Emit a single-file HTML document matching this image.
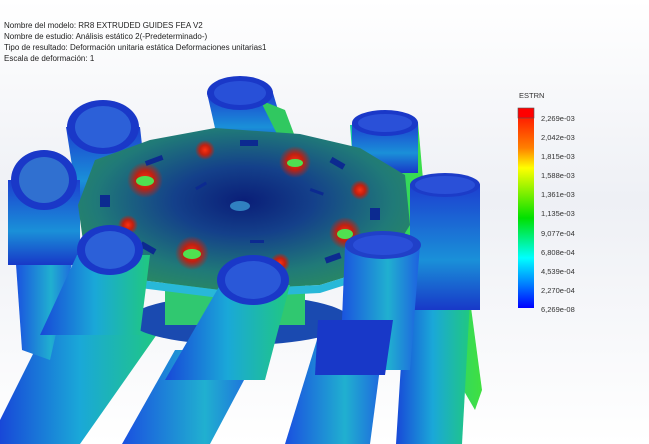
<!DOCTYPE html>
<html><head><meta charset="utf-8"><style>
html,body{margin:0;padding:0;width:649px;height:444px;overflow:hidden;background:#fff}
.bg{position:absolute;left:0;top:0;width:649px;height:444px;background:linear-gradient(180deg,#ffffff 0%,#eef0f5 45%,#ffffff 100%)}
.hdr{position:absolute;left:4px;top:20px;font:8px/11px "Liberation Sans",sans-serif;color:#222}
.lg{position:absolute;font:7.5px "Liberation Sans",sans-serif;color:#333}
svg{position:absolute;left:0;top:0}
</style></head><body>
<div class="bg"></div>
<svg width="649" height="444" viewBox="0 0 649 444">
<defs>
<linearGradient id="tube" x1="0" y1="0" x2="1" y2="0"><stop offset="0" stop-color="#1848d8"/><stop offset=".5" stop-color="#1aa8d8"/><stop offset="1" stop-color="#20c880"/></linearGradient>
<linearGradient id="tube2" x1="0" y1="0" x2="1" y2="0"><stop offset="0" stop-color="#1a50e0"/><stop offset=".6" stop-color="#20b0d0"/><stop offset="1" stop-color="#1e60e0"/></linearGradient>
<linearGradient id="grn" x1="0" y1="0" x2="1" y2="0"><stop offset="0" stop-color="#18c8a0"/><stop offset="1" stop-color="#40e040"/></linearGradient>
<linearGradient id="cup" x1="0" y1="0" x2="0" y2="1"><stop offset="0" stop-color="#1c40d0"/><stop offset=".6" stop-color="#1a90d8"/><stop offset="1" stop-color="#1838c8"/></linearGradient>
<radialGradient id="plate" cx=".5" cy=".45" r=".6"><stop offset="0" stop-color="#0a1e78"/><stop offset=".35" stop-color="#14408a"/><stop offset=".75" stop-color="#207a78"/><stop offset="1" stop-color="#2a8a60"/></radialGradient>
<radialGradient id="hot"><stop offset="0" stop-color="#ff3010"/><stop offset=".5" stop-color="#c02010"/><stop offset="1" stop-color="#c02010" stop-opacity="0"/></radialGradient>
<linearGradient id="bar" x1="0" y1="0" x2="0" y2="1"><stop offset="0" stop-color="#ff0000"/><stop offset=".2" stop-color="#ff8000"/><stop offset=".3" stop-color="#ffff00"/><stop offset=".55" stop-color="#00e000"/><stop offset=".75" stop-color="#00ffff"/><stop offset=".88" stop-color="#0080ff"/><stop offset="1" stop-color="#0000ff"/></linearGradient>
</defs>
<!-- legs -->
<polygon points="415,300 470,300 482,390 475,410 440,350" fill="url(#grn)"/>
<polygon points="45,330 160,330 80,444 0,444 0,420" fill="url(#tube)"/>
<polygon points="175,350 260,350 210,444 122,444" fill="url(#tube2)"/>
<polygon points="320,330 385,330 370,444 285,444" fill="url(#tube2)"/>
<polygon points="405,300 470,300 462,444 396,444" fill="url(#tube)"/>
<polygon points="15,250 75,250 50,360 22,350" fill="url(#tube2)"/>
<!-- under plate -->
<ellipse cx="240" cy="320" rx="110" ry="25" fill="#1a4ab0"/>
<rect x="165" y="280" width="140" height="45" fill="#30c870"/>
<!-- back cups -->
<polygon points="207,93 273,93 290,150 220,150" fill="url(#cup)"/>
<polygon points="260,100 285,110 300,150 285,150" fill="#30c860"/>
<ellipse cx="240" cy="93" rx="33" ry="17" fill="#1a38c8"/><ellipse cx="240" cy="93" rx="26" ry="12" fill="#2850d8"/>
<polygon points="350,125 418,122 430,260 410,270 355,190" fill="url(#grn)"/>
<rect x="352" y="123" width="66" height="50" fill="url(#cup)"/>
<ellipse cx="385" cy="123" rx="33" ry="13" fill="#1a38c8"/><ellipse cx="385" cy="123" rx="27" ry="9" fill="#2a50d8"/>
<polygon points="66,127 140,127 150,217 80,217" fill="url(#cup)"/>
<ellipse cx="103" cy="127" rx="36" ry="27" fill="#1a38c8"/><ellipse cx="103" cy="127" rx="28" ry="21" fill="#2c60d8"/>
<rect x="8" y="180" width="72" height="85" fill="url(#cup)"/>
<ellipse cx="44" cy="180" rx="33" ry="30" fill="#1a38c8"/><ellipse cx="44" cy="180" rx="25" ry="23" fill="#3070d0"/>
<!-- plate -->
<polygon points="95,160 150,140 215,128 300,134 360,148 405,175 410,225 385,265 320,285 220,290 140,280 85,255 78,205" fill="url(#plate)"/>
<polygon points="85,255 140,280 220,290 320,285 385,265 383,273 320,293 220,298 140,288 85,262" fill="#28b8d8"/>
<g fill="url(#hot)">
<circle cx="145" cy="180" r="18"/><circle cx="295" cy="162" r="16"/><circle cx="345" cy="233" r="16"/><circle cx="192" cy="253" r="17"/>
<circle cx="205" cy="150" r="10"/><circle cx="360" cy="190" r="10"/><circle cx="128" cy="225" r="10"/><circle cx="280" cy="263" r="10"/>
</g>
<g fill="#50e050"><ellipse cx="145" cy="181" rx="9" ry="5"/><ellipse cx="295" cy="163" rx="8" ry="4"/><ellipse cx="345" cy="234" rx="8" ry="5"/><ellipse cx="192" cy="254" rx="9" ry="5"/></g>
<g fill="#0c2a90"><rect x="145" y="158" width="18" height="5" transform="rotate(-20 154 160)"/><rect x="240" y="140" width="18" height="6"/><rect x="330" y="160" width="15" height="6" transform="rotate(30 337 163)"/><rect x="370" y="208" width="10" height="12"/><rect x="325" y="255" width="16" height="6" transform="rotate(-20 333 258)"/><rect x="100" y="195" width="10" height="12"/><rect x="140" y="245" width="16" height="6" transform="rotate(30 148 248)"/><rect x="195" y="185" width="12" height="3" transform="rotate(-30 200 186)"/><rect x="310" y="190" width="14" height="3" transform="rotate(20 316 191)"/><rect x="250" y="240" width="14" height="3"/></g>
<ellipse cx="240" cy="206" rx="10" ry="5" fill="#3080c0"/>
<!-- front cups -->
<rect x="410" y="185" width="70" height="125" fill="url(#cup)"/>
<ellipse cx="445" cy="185" rx="35" ry="12" fill="#1c3cc8"/><ellipse cx="445" cy="185" rx="30" ry="9" fill="#2a50d8"/>
<polygon points="345,245 420,245 410,370 340,370" fill="url(#tube2)"/>
<polygon points="318,320 393,320 385,375 315,375" fill="#1838c8"/>
<ellipse cx="383" cy="245" rx="38" ry="14" fill="#2040c8"/><ellipse cx="383" cy="245" rx="30" ry="10" fill="#2a4ed8"/>
<polygon points="77,255 150,255 140,335 40,335" fill="url(#tube)"/>
<ellipse cx="110" cy="250" rx="33" ry="25" fill="#1a38c8"/><ellipse cx="110" cy="250" rx="25" ry="19" fill="#2c60d8"/>
<polygon points="220,285 290,285 265,380 165,380" fill="url(#tube)"/>
<ellipse cx="253" cy="280" rx="36" ry="25" fill="#1a38c8"/><ellipse cx="253" cy="280" rx="28" ry="19" fill="#2a58d8"/>
<!-- legend -->
<rect x="518" y="108" width="16" height="200" fill="url(#bar)"/>
<rect x="518" y="108" width="16" height="10" fill="#ff0000" stroke="#555" stroke-width=".6"/>
</svg>
<div class="hdr">Nombre del modelo: RR8 EXTRUDED GUIDES FEA V2<br>Nombre de estudio: Análisis estático 2(-Predeterminado-)<br>Tipo de resultado: Deformación unitaria estática Deformaciones unitarias1<br>Escala de deformación: 1</div>
<div class="lg" style="left:519px;top:91px">ESTRN</div>
<div class="lg" style="left:541px;top:109px;line-height:19.1px">2,269e-03<br>2,042e-03<br>1,815e-03<br>1,588e-03<br>1,361e-03<br>1,135e-03<br>9,077e-04<br>6,808e-04<br>4,539e-04<br>2,270e-04<br>6,269e-08</div>
</body></html>
